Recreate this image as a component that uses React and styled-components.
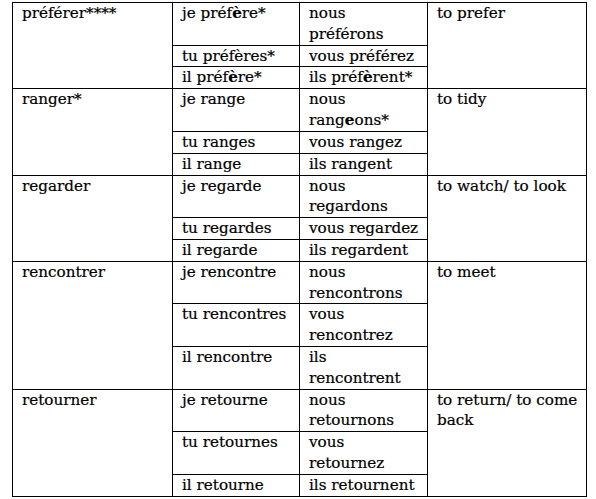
import { createGlobalStyle } from "styled-components";
import styled from "styled-components";

const GlobalStyle = createGlobalStyle`
  html, body {
    margin: 0;
    padding: 0;
    background: #fff;
  }
  body {
    font-family: "DejaVu Serif", "Liberation Serif", serif;
    color: #000;
  }
`;

const Page = styled.div`
  padding: 2px 0 0 12px;
`;

const Table = styled.table`
  border-collapse: collapse;
  table-layout: fixed;
  width: 575px;
  font-size: 15.2px;
`;

const Cell = styled.td`
  border: 1px solid #000;
  padding: 0 8px 0 9px;
  line-height: 20.82px;
  vertical-align: top;
  white-space: nowrap;
  -webkit-text-stroke: 0.2px #000;
`;

const B = styled.b`
  font-weight: bold;
`;

const verbs = [
  {
    inf: "préférer****",
    en: "to prefer",
    rows: [
      [<>je préf<B>è</B>re*</>, <>nous<br />préférons</>],
      ["tu préfères*", "vous préférez"],
      [<>il préf<B>è</B>re*</>, <>ils préf<B>è</B>rent*</>],
    ],
  },
  {
    inf: "ranger*",
    en: "to tidy",
    rows: [
      ["je range", <>nous<br />rang<B>e</B>ons*</>],
      ["tu ranges", "vous rangez"],
      ["il range", "ils rangent"],
    ],
  },
  {
    inf: "regarder",
    en: "to watch/ to look",
    rows: [
      ["je regarde", <>nous<br />regardons</>],
      ["tu regardes", "vous regardez"],
      ["il regarde", "ils regardent"],
    ],
  },
  {
    inf: "rencontrer",
    en: "to meet",
    rows: [
      ["je rencontre", <>nous<br />rencontrons</>],
      ["tu rencontres", <>vous<br />rencontrez</>],
      ["il rencontre", <>ils<br />rencontrent</>],
    ],
  },
  {
    inf: "retourner",
    en: <>to return/ to come<br />back</>,
    rows: [
      ["je retourne", <>nous<br />retournons</>],
      ["tu retournes", <>vous<br />retournez</>],
      ["il retourne", "ils retournent"],
    ],
  },
];

function App() {
  return (
    <>
      <GlobalStyle />
      <Page>
        <Table>
          <colgroup>
            <col style={{ width: 160 }} />
            <col style={{ width: 127 }} />
            <col style={{ width: 128 }} />
            <col style={{ width: 159 }} />
          </colgroup>
          <tbody>
            {verbs.map((v, i) =>
              v.rows.map((r, j) => (
                <tr key={i + "-" + j}>
                  {j === 0 && <Cell rowSpan={3}>{v.inf}</Cell>}
                  <Cell>{r[0]}</Cell>
                  <Cell>{r[1]}</Cell>
                  {j === 0 && <Cell rowSpan={3}>{v.en}</Cell>}
                </tr>
              ))
            )}
          </tbody>
        </Table>
      </Page>
    </>
  );
}

export default App;
